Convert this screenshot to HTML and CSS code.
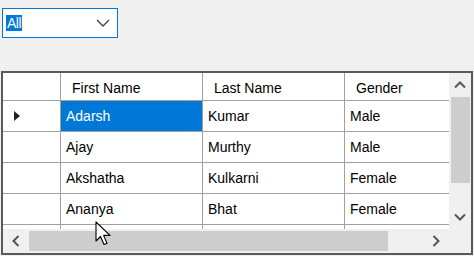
FILE: index.html
```html
<!DOCTYPE html>
<html lang="en">
<head>
    <meta charset="UTF-8">
    <title>Grid Filter</title>
    <link rel="stylesheet" href="styles.css">
</head>
<body>
    <div class="form">
        <div class="combo">
            <span class="combo-text">All</span>
            <svg class="combo-arrow" width="14" height="8" viewBox="0 0 14 8">
                <path d="M1 1 L7 7 L13 1" fill="none" stroke="#444" stroke-width="1.4"/>
            </svg>
        </div>

        <div class="grid">
            <div class="grid-main">
                <div class="rows">
                    <div class="row head">
                        <div class="cell rh"></div>
                        <div class="cell">First Name</div>
                        <div class="cell">Last Name</div>
                        <div class="cell">Gender</div>
                    </div>
                    <div class="row">
                        <div class="cell rh">
                            <svg width="8" height="12" viewBox="0 0 8 12"><path d="M1 1 L7 6 L1 11 Z" fill="#222"/></svg>
                        </div>
                        <div class="cell selected">Adarsh</div>
                        <div class="cell">Kumar</div>
                        <div class="cell">Male</div>
                    </div>
                    <div class="row">
                        <div class="cell rh"></div>
                        <div class="cell">Ajay</div>
                        <div class="cell">Murthy</div>
                        <div class="cell">Male</div>
                    </div>
                    <div class="row">
                        <div class="cell rh"></div>
                        <div class="cell">Akshatha</div>
                        <div class="cell">Kulkarni</div>
                        <div class="cell">Female</div>
                    </div>
                    <div class="row">
                        <div class="cell rh"></div>
                        <div class="cell">Ananya</div>
                        <div class="cell">Bhat</div>
                        <div class="cell">Female</div>
                    </div>
                    <div class="row">
                        <div class="cell rh"></div>
                        <div class="cell"></div>
                        <div class="cell"></div>
                        <div class="cell"></div>
                    </div>
                </div>
                <div class="vscroll">
                    <svg class="sb-arrow" width="12" height="8" viewBox="0 0 12 8"><path d="M1 6.5 L6 1.5 L11 6.5" fill="none" stroke="#555" stroke-width="2"/></svg>
                    <div class="vthumb"></div>
                    <div class="vspace"></div>
                    <svg class="sb-arrow" width="12" height="8" viewBox="0 0 12 8"><path d="M1 1.5 L6 6.5 L11 1.5" fill="none" stroke="#555" stroke-width="2"/></svg>
                </div>
            </div>
            <div class="hbar">
                <div class="hscroll">
                    <svg class="sb-arrow-h" width="8" height="12" viewBox="0 0 8 12"><path d="M6.5 1 L1.5 6 L6.5 11" fill="none" stroke="#555" stroke-width="2"/></svg>
                    <div class="hthumb"></div>
                    <div class="hspace"></div>
                    <svg class="sb-arrow-h" width="8" height="12" viewBox="0 0 8 12"><path d="M1.5 1 L6.5 6 L1.5 11" fill="none" stroke="#555" stroke-width="2"/></svg>
                </div>
                <div class="corner"></div>
            </div>
        </div>
    </div>

    <!-- mouse pointer over the grid -->
    <svg class="cursor" width="17" height="26" viewBox="0 0 17 26">
        <path d="M1 1 L1 20 L5.5 15.5 L9 23.5 L12 22.2 L8.6 14.4 L15 14.4 Z" fill="#fff" stroke="#000" stroke-width="1.1" stroke-linejoin="round"/>
    </svg>
</body>
</html>
```

FILE: styles.css
```css
body {
    margin: 0;
    background: #f0f0f0;
    font-family: 'Liberation Sans', Arial, sans-serif;
    font-size: 14px;
    color: #000;
    position: relative;
    width: 474px;
    height: 256px;
    overflow: hidden;
}

.form {
    padding: 8px 0 0 1px;
}

.combo {
    box-sizing: border-box;
    width: 116px;
    height: 30px;
    margin-left: 1px;
    background: #fff;
    border: 1px solid #0078d7;
    display: flex;
    align-items: center;
    justify-content: space-between;
    padding: 0 7px 0 3px;
}

.combo-text {
    background: #0078d7;
    color: #fff;
    line-height: 16px;
    padding: 0 1px;
    letter-spacing: -0.5px;
}

.grid {
    box-sizing: border-box;
    width: 472px;
    height: 184px;
    margin-top: 33px;
    border: 2px solid #5a5a5a;
    display: flex;
    flex-direction: column;
    background: #fff;
}

.grid-main {
    flex: 1;
    display: flex;
    min-height: 0;
}

.rows {
    flex: 1;
    overflow: hidden;
    background: #fff;
}

.row {
    display: grid;
    grid-template-columns: 58px 142px 142px 105px;
    height: 31px;
}

.row.head {
    height: 28px;
}

.cell {
    box-sizing: border-box;
    border-right: 1px solid #a0a0a0;
    border-bottom: 1px solid #a0a0a0;
    padding: 0 5px;
    display: flex;
    align-items: center;
    white-space: nowrap;
    overflow: hidden;
}

.head .cell {
    padding-left: 11px;
    padding-top: 2px;
}

.cell.rh {
    padding-left: 10px;
}

.cell.selected {
    background: #0078d7;
    color: #fff;
    border-bottom-color: #a0a0a0;
}

.vscroll {
    width: 22px;
    background: #f0f0f0;
    display: flex;
    flex-direction: column;
    align-items: center;
}

.sb-arrow {
    margin: 8px 0;
}

.vthumb {
    width: 19px;
    height: 86px;
    background: #cdcdcd;
}

.vspace {
    flex: 1;
}

.hbar {
    display: flex;
    height: 24px;
}

.hscroll {
    flex: 1;
    background: #f0f0f0;
    display: flex;
    align-items: center;
}

.sb-arrow-h {
    margin: 0 9px;
}

.hthumb {
    width: 359px;
    height: 20px;
    background: #cdcdcd;
}

.hspace {
    flex: 1;
}

.corner {
    width: 22px;
    background: #f0f0f0;
}

.cursor {
    position: absolute;
    left: 95px;
    top: 221px;
}
```
